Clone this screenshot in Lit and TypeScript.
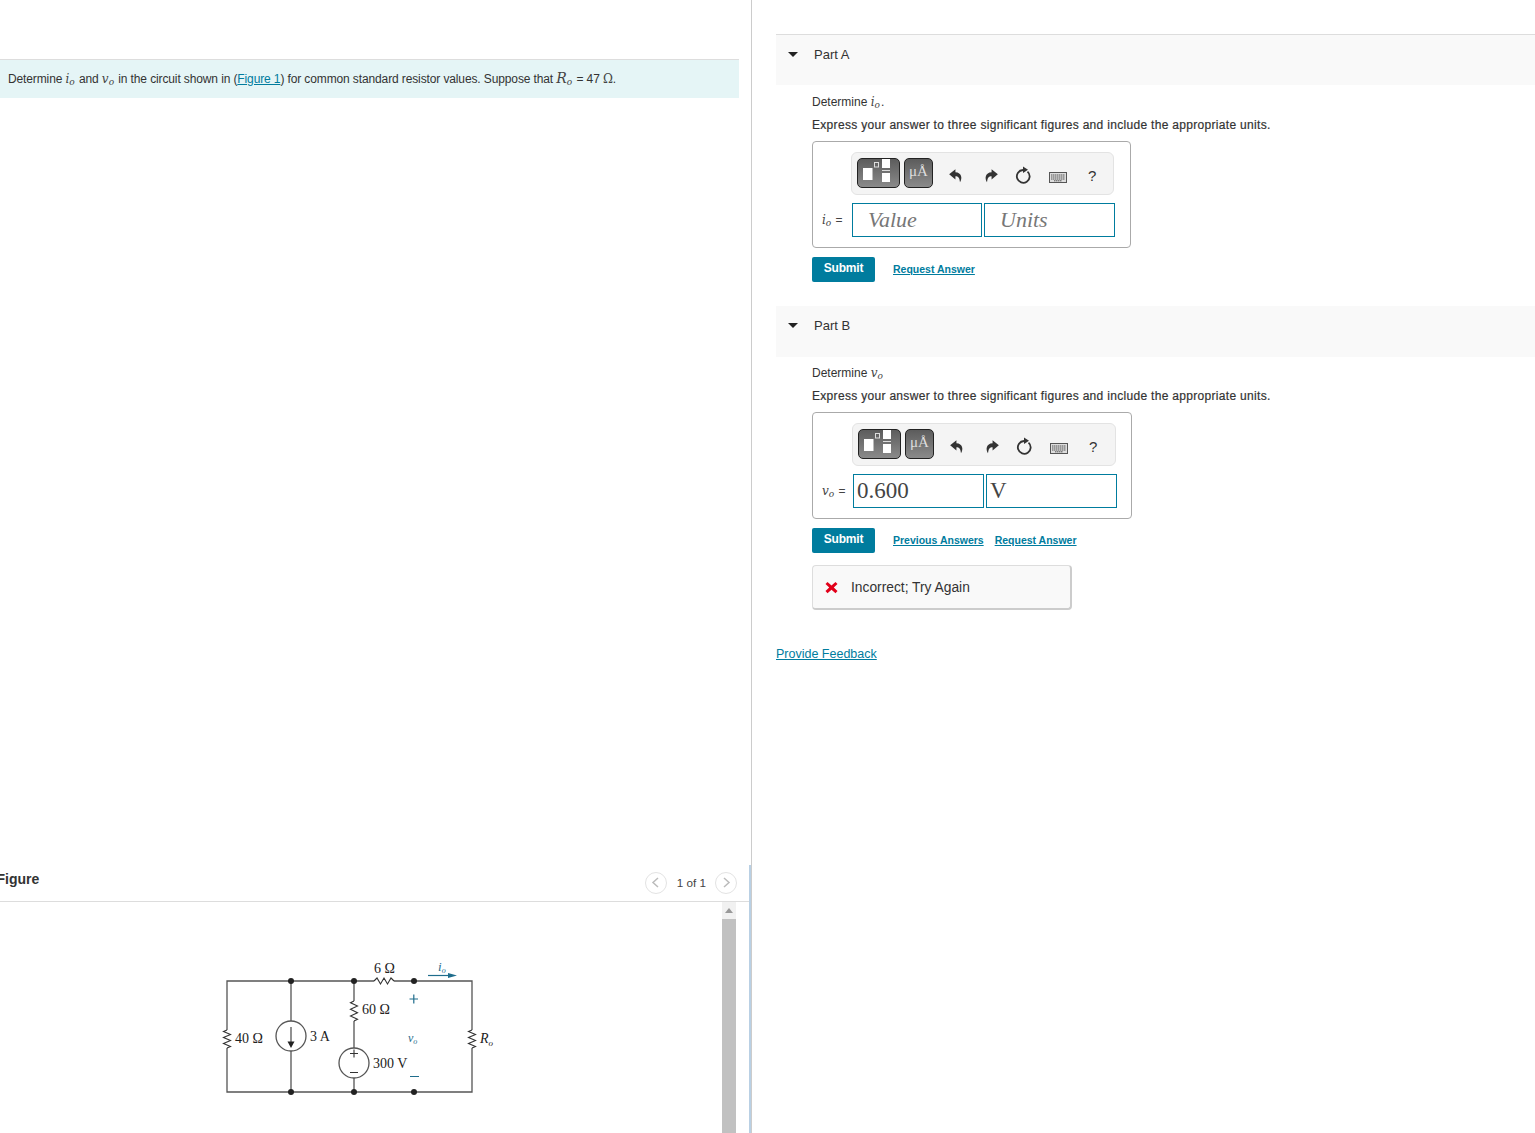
import { LitElement, html, css, svg } from "lit";
import { customElement } from "lit/decorators.js";

const m = (b: string, s = "o") => html`<span class="m ${b === "R" ? "big" : ""}">${b}<sub>${s}</sub></span>`;

const resistorV = (x: number, y: number, h: number) => {
  const step = h / 6;
  let d = `M${x} ${y}`;
  for (let i = 0; i < 6; i++) d += ` L${x + (i % 2 ? 3.5 : -3.5)} ${y + step * (i + 0.5)}`;
  d += ` L${x} ${y + h}`;
  return svg`<path class="w thin" d=${d} />`;
};

const circuit = svg`
<svg class="circuit" width="300" height="160" viewBox="210 950 300 160">
  <path class="w" d="M227 1030V981H374M394 981H472V1030M472 1048V1092H227V1048" />
  <path class="w" d="M291 981V1021M291 1051V1092M354 981V1001M354 1021V1048M354 1078V1092" />
  ${resistorV(227, 1030, 18)}
  ${resistorV(354, 1001, 20)}
  ${resistorV(472, 1030, 18)}
  <path class="w thin" d="M374 981L377 978L380.500 984L384 978L387.500 984L391 978L394 981" />
  <circle class="w" cx="291" cy="1036" r="15" />
  <circle class="w" cx="354" cy="1063" r="15" />
  <path class="w" d="M291 1027V1044" />
  <path class="k" d="M287.500 1041.500H294.500L291 1048Z" />
  <path class="w thin" d="M350 1053.500H358M354 1049.500V1057.500M350 1072.500H358" />
  <g class="k">
    <circle cx="291" cy="981" r="3" /><circle cx="354" cy="981" r="3" /><circle cx="414" cy="981" r="3" />
    <circle cx="291" cy="1092" r="3" /><circle cx="354" cy="1092" r="3" /><circle cx="414" cy="1092" r="3" />
  </g>
  <g class="t">
    <text x="374" y="973">6 Ω</text>
    <text x="362" y="1014">60 Ω</text>
    <text x="235" y="1043">40 Ω</text>
    <text x="310" y="1041">3 A</text>
    <text x="373" y="1068">300 V</text>
    <text x="480" y="1043" class="i">R<tspan dy="3" font-size="9">o</tspan></text>
  </g>
  <g class="b">
    <text x="438" y="971" class="i">i<tspan dy="2" font-size="8">o</tspan></text>
    <text x="408" y="1042" class="i" font-size="12">v<tspan dy="2" font-size="8">o</tspan></text>
    <path class="bl" d="M409.500 999H418M413.800 994.500V1003.500M410 1076.500H419" />
    <path class="bl" d="M428 975.500H450" />
    <path class="bf" d="M448 973L457 975.500L448 978Z" />
  </g>
</svg>`;

const toolbar = html`
  <div class="tools">
    <div class="tbtn t1">
      <svg width="43" height="30" viewBox="0 0 43 30">
        <rect x="6" y="10" width="9.500" height="12" fill="#fff" />
        <rect x="17.500" y="4.500" width="4" height="4.500" fill="none" stroke="#ddd" />
        <rect x="25" y="1" width="8" height="9" fill="#fff" />
        <rect x="25" y="12" width="8" height="1" fill="#ddd" />
        <rect x="25" y="15" width="8" height="9" fill="#fff" />
      </svg>
    </div>
    <div class="tbtn t2">μÅ</div>
    <svg class="ico" style="margin-left:15px" width="16" height="16" viewBox="0 0 14 14"><path d="M6.500 1L1 5.500L6.500 10V7.300C9 7.300 10 8.500 10.500 12.500C12.800 9 12 4 6.500 3.700Z" fill="#333" /></svg>
    <svg class="ico" style="margin-left:19px" width="16" height="16" viewBox="0 0 14 14"><path d="M7.500 1L13 5.500L7.500 10V7.300C5 7.300 4 8.500 3.500 12.500C1.200 9 2 4 7.500 3.700Z" fill="#333" /></svg>
    <svg class="ico" style="margin-left:16px;margin-top:8px" width="18" height="18" viewBox="0 0 18 18"><path d="M12.500 5.600A6.400 6.400 0 1 1 8 4" fill="none" stroke="#333" stroke-width="1.800" /><path d="M8 0.500L13 3.800L8 7Z" fill="#333" /></svg>
    <svg class="ico" style="margin-left:16px;margin-top:14px" width="18" height="11" viewBox="0 0 18 11"><rect x=".5" y=".5" width="17" height="10" fill="#ddd" stroke="#555" /><path d="M2 3H16M2 5H16M2 7H16M5 8.800H13" stroke="#555" stroke-dasharray="1.500 .5" /></svg>
    <span class="help">?</span>
  </div>`;

@customElement("app-root")
export class AppRoot extends LitElement {
  static styles = css`
    :host { display: flex; height: 1133px; overflow: hidden; background: #fff; color: #333; font: 12px "Liberation Sans", Arial, sans-serif; }
    a { color: #007c9e; }
    .left { width: 752px; height: 1133px; flex: none; box-sizing: border-box; border-right: 1px solid #ccc; display: flex; flex-direction: column; padding-top: 59px; overflow: hidden; position: relative; }
    .blueline { position: absolute; right: 0; top: 865px; bottom: 0; width: 2px; background: #b9d0e4; }
    .prompt { width: 739px; height: 39px; box-sizing: border-box; background: #e5f5f6; border-top: 1px solid #ddd; padding: 10px 0 0 8px; line-height: 16px; white-space: nowrap; letter-spacing: -.12px; }
    .m { font: italic 12px "DejaVu Serif", serif; letter-spacing: 0; color: #444; padding-right: 1px; }
    .m.big { font-size: 14px; }
    .m sub { font-size: 9px; line-height: 0; vertical-align: -2px; }
    .om { font: 12px "DejaVu Serif", serif; letter-spacing: 0; color: #444; }
    .fill { flex: 1; }
    .fighead { height: 33px; width: 751px; box-sizing: border-box; border-bottom: 1px solid #ddd; display: flex; align-items: center; }
    .figtitle { font-weight: bold; font-size: 14px; margin-left: -3.500px; margin-top: -13px; }
    .pager { margin-left: auto; margin-right: 14px; display: flex; align-items: center; margin-top: -5px; color: #444; }
    .pg { width: 22px; height: 22px; box-sizing: border-box; border: 1px solid #e3e3e3; border-radius: 50%; display: flex; align-items: center; justify-content: center; }
    .pgtext { margin: 0 9px 0 10px; font-size: 11.700px; }
    .figbody { height: 231px; display: flex; }
    .canvas { width: 722px; flex: none; padding: 48px 0 0 210px; box-sizing: border-box; }
    .circuit { display: block; }
    .w { fill: none; stroke: #555; stroke-width: 1.300; }
    .thin { stroke-width: 1.100; stroke: #333; }
    .k { fill: #222; }
    .t { font: 14px "Liberation Serif", serif; fill: #222; }
    .t .i { font-style: italic; }
    .b { font: italic 13px "Liberation Serif", serif; fill: #1f6d8c; }
    .bl { fill: none; stroke: #1f6d8c; stroke-width: 1.200; }
    .bf { fill: #1f6d8c; }
    .sb { width: 14px; flex: none; background: #f1f1f1; display: flex; flex-direction: column; }
    .arrow { height: 17px; flex: none; display: flex; align-items: center; justify-content: center; }
    .thumb { flex: 1; background: #c1c1c1; }
    .right { flex: 1; min-width: 0; padding: 34px 0 0 24px; }
    .phead { height: 51px; box-sizing: border-box; background: #f9f9f9; font-size: 13px; display: flex; padding-top: 11px; color: #333; line-height: 18px; }
    .phead.first { border-top: 1px solid #ddd; }
    .tri { width: 0; height: 0; border-left: 5px solid transparent; border-right: 5px solid transparent; border-top: 5px solid #222; margin: 6px 16px 0 12px; }
    .pbody { padding: 9px 0 0 36px; }
    .pbody.b2 { padding-top: 8px; }
    .line { line-height: 16px; height: 16px; }
    .expr { margin-top: 7px; -webkit-text-stroke: .2px #333; letter-spacing: .31px; }
    .abox { margin-top: 8px; width: 319px; height: 107px; box-sizing: border-box; border: 1px solid #aaa; border-radius: 4px; padding: 10px 0 0 38px; position: relative; }
    .tools { width: 263px; height: 43px; box-sizing: border-box; background: #f4f4f4; border: 1px solid #e3e3e3; border-radius: 6px; display: flex; align-items: flex-start; padding: 5px 0 0 5px; margin-bottom: 8px; }
    .tbtn { height: 30px; box-sizing: border-box; border: 1px solid #222; border-radius: 5px; background: linear-gradient(#5c5c5c, #8a8a8a); color: #ddd; }
    .t1 { width: 43px; }
    .t1 svg { display: block; margin: -1px; }
    .t2 { width: 29px; margin-left: 4px; font: 15px/25px "Liberation Serif", serif; text-align: center; }
    .ico { display: block; flex: none; margin-top: 10px; }
    .help { margin-left: 21px; font-size: 15px; line-height: 18px; margin-top: 9px; color: #333; }
    .fields { display: flex; gap: 2px; align-items: stretch; margin-left: 1px; }
    .lab { position: absolute; left: 9px; font-size: 12px; white-space: nowrap; line-height: 34px; color: #444; }
    .inp { width: 130px; height: 34px; box-sizing: border-box; border: 1px solid #007c9e; font: 23px/32px "Liberation Serif", serif; color: #444; padding-left: 3px; }
    .inp.ph { font-size: 22px; font-style: italic; color: #777; padding-left: 15px; }
    .inp.u { width: 131px; }
    .acts { margin-top: 9px; display: flex; align-items: center; height: 25px; }
    .submit { width: 63px; height: 25px; border-radius: 2px; background: #007c9e; color: #fff; font-weight: bold; text-align: center; line-height: 23px; letter-spacing: -.2px; }
    .acts a { font-size: 10.500px; line-height: 20px; margin-top: -2px; font-weight: bold; margin-left: 18px; }
    .acts a + a { margin-left: 11px; }
    .partb { margin-top: 24px; }
    .b2 .abox { width: 320px; }
    .b2 .tools { width: 264px; margin-left: 1px; padding-left: 5px; }
    .b2 .fields { margin-left: 2px; }
    .b2 .inp { width: 131px; }
    .fb { margin-top: 12px; width: 260px; height: 45px; box-sizing: border-box; border: 1px solid #ddd; border-right: 2px solid #ccc; border-bottom: 2px solid #ccc; border-radius: 4px; background: #f9f9f9; display: flex; align-items: center; padding-left: 12px; font-size: 13.800px; color: #333; }
    .fb svg { margin-right: 13px; }
    .pf { display: block; margin-top: 36px; font-size: 12.500px; line-height: 16px; }
  `;
  render() {
    return html`
      <div class="left">
        <div class="prompt">Determine ${m("i")} and ${m("v")} in the circuit shown in (<a href="#">Figure 1</a>) for common standard resistor values. Suppose that ${m("R")} = 47 <span class="om">Ω</span>.</div>
        <div class="fill"></div>
        <div class="fighead">
          <span class="figtitle">Figure</span>
          <div class="pager">
            <span class="pg"><svg width="9" height="11" viewBox="0 0 9 11"><path d="M7 1L2 5.500L7 10" fill="none" stroke="#bbb" stroke-width="1.500"/></svg></span>
            <span class="pgtext">1 of 1</span>
            <span class="pg"><svg width="9" height="11" viewBox="0 0 9 11"><path d="M2 1L7 5.500L2 10" fill="none" stroke="#bbb" stroke-width="1.500"/></svg></span>
          </div>
        </div>
        <div class="figbody">
          <div class="canvas">${circuit}</div>
          <div class="sb">
            <div class="arrow"><svg width="8" height="5" viewBox="0 0 8 5"><path d="M4 0L8 5H0Z" fill="#999"/></svg></div>
            <div class="thumb"></div>
          </div>
        </div>
        <div class="blueline"></div>
      </div>
      <div class="right">
        <div class="phead first"><span class="tri"></span>Part A</div>
        <div class="pbody">
          <div class="line">Determine ${m("i")}.</div>
          <div class="line expr">Express your answer to three significant figures and include the appropriate units.</div>
          <div class="abox">
            ${toolbar}
            <div class="fields">
              <span class="lab">${m("i")} =</span>
              <div class="inp ph">Value</div>
              <div class="inp ph u">Units</div>
            </div>
          </div>
          <div class="acts"><div class="submit">Submit</div><a href="#">Request Answer</a></div>
        </div>
        <div class="phead partb"><span class="tri"></span>Part B</div>
        <div class="pbody b2">
          <div class="line">Determine ${m("v")}</div>
          <div class="line expr">Express your answer to three significant figures and include the appropriate units.</div>
          <div class="abox">
            ${toolbar}
            <div class="fields">
              <span class="lab">${m("v")} =</span>
              <div class="inp">0.600</div>
              <div class="inp">V</div>
            </div>
          </div>
          <div class="acts"><div class="submit">Submit</div><a href="#">Previous Answers</a><a href="#">Request Answer</a></div>
          <div class="fb">
            <svg width="13" height="13" viewBox="0 0 13 13"><path d="M2.500 1L6.500 4.500L10.500 1L12.500 3L8.800 6.500L12.500 10L10.500 12.300L6.500 8.700L2.500 12.300L.5 10L4.200 6.500L.5 3Z" fill="#e2001a"/></svg>
            Incorrect; Try Again
          </div>
        </div>
        <a class="pf" href="#">Provide Feedback</a>
      </div>
    `;
  }
}
